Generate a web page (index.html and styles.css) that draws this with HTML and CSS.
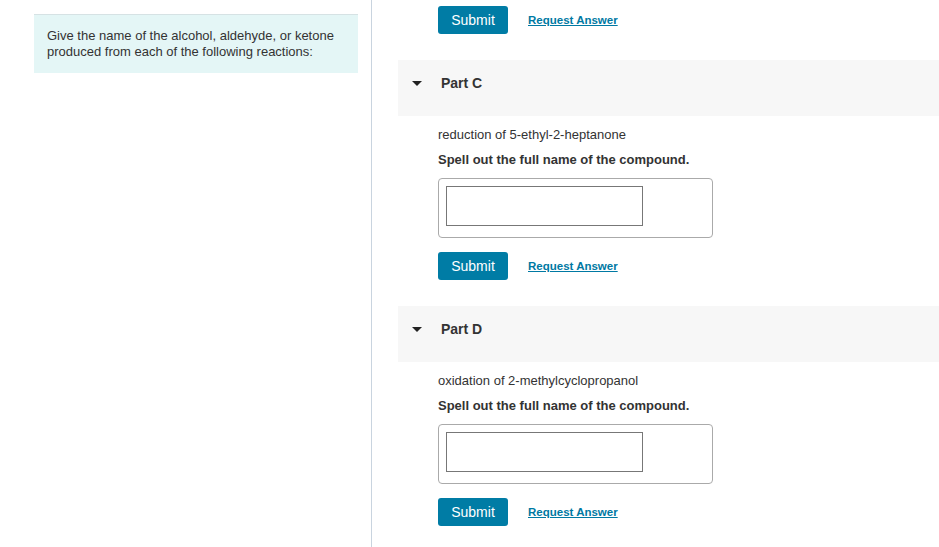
FILE: index.html
```html
<!DOCTYPE html>
<html lang="en">
<head>
  <meta charset="UTF-8">
  <title>Alcohols, Aldehydes and Ketones</title>
  <meta name="viewport" content="width=device-width, initial-scale=1.0">
  <link rel="stylesheet" href="styles.css">
</head>
<body>
  <div class="page">
    <div class="intro-col">
      <div class="intro-box">
        Give the name of the alcohol, aldehyde, or ketone<br>
        produced from each of the following reactions:
      </div>
    </div>
    <div class="parts-col">
      <div class="actions first">
        <button class="submit-btn">Submit</button>
        <a class="request-link" href="#">Request Answer</a>
      </div>

      <div class="part">
        <div class="part-header">
          <span class="caret"></span>
          <span class="part-title">Part C</span>
        </div>
        <div class="part-body">
          <p class="prompt">reduction of 5-ethyl-2-heptanone</p>
          <p class="instruction">Spell out the full name of the compound.</p>
          <div class="answer-box">
            <input class="answer-input" type="text" aria-label="Part C answer">
          </div>
          <div class="actions">
            <button class="submit-btn">Submit</button>
            <a class="request-link" href="#">Request Answer</a>
          </div>
        </div>
      </div>

      <div class="part">
        <div class="part-header">
          <span class="caret"></span>
          <span class="part-title">Part D</span>
        </div>
        <div class="part-body">
          <p class="prompt">oxidation of 2-methylcyclopropanol</p>
          <p class="instruction">Spell out the full name of the compound.</p>
          <div class="answer-box">
            <input class="answer-input" type="text" aria-label="Part D answer">
          </div>
          <div class="actions">
            <button class="submit-btn">Submit</button>
            <a class="request-link" href="#">Request Answer</a>
          </div>
        </div>
      </div>
    </div>
  </div>
</body>
</html>
```

FILE: styles.css
```css
body {
  margin: 0;
  font-family: "Liberation Sans", Arial, sans-serif;
  color: #333;
  background: #fff;
}
.page {
  display: flex;
  min-height: 547px;
}
.intro-col {
  width: 371px;
  flex-shrink: 0;
  padding: 14px 13px 0 34px;
  box-sizing: border-box;
}
.intro-box {
  background: #e4f6f6;
  border-top: 1px solid #d6e2e4;
  padding: 13px 13px 13px 13px;
  font-size: 13px;
  line-height: 16px;
  color: #333;
}
.parts-col {
  flex: 1;
  border-left: 1px solid #c9d4df;
  padding-left: 26px;
  padding-top: 6px;
}
.actions {
  display: flex;
  align-items: center;
  gap: 20px;
  margin-bottom: 26px;
}
.actions.first {
  margin-left: 40px;
}
.submit-btn {
  width: 70px;
  height: 28px;
  background: #007ca5;
  color: #fff;
  border: none;
  border-radius: 3px;
  font-family: inherit;
  font-size: 14px;
  padding: 0;
  cursor: pointer;
}
.request-link {
  color: #0079a3;
  font-size: 11.5px;
  font-weight: bold;
  text-decoration: underline;
}
.part-header {
  height: 56px;
  box-sizing: border-box;
  background: #f7f7f7;
  display: flex;
  align-items: flex-start;
  padding: 15px 0 0 14px;
}
.caret {
  width: 0;
  height: 0;
  border-left: 5px solid transparent;
  border-right: 5px solid transparent;
  border-top: 5px solid #222;
  margin-right: 19px;
  margin-top: 6px;
}
.part-title {
  font-size: 14px;
  line-height: 16px;
  font-weight: bold;
  color: #333;
}
.part-body {
  padding-left: 40px;
  padding-top: 11px;
}
.prompt {
  margin: 0;
  font-size: 13px;
  line-height: 16px;
}
.instruction {
  margin: 9px 0 0 0;
  font-size: 13px;
  line-height: 16px;
  font-weight: bold;
}
.answer-box {
  width: 275px;
  height: 60px;
  box-sizing: border-box;
  margin-top: 10px;
  margin-bottom: 14px;
  border: 1px solid #aaa;
  border-radius: 4px;
  padding: 7px;
}
.answer-input {
  display: block;
  width: 197px;
  height: 40px;
  box-sizing: border-box;
  border: 1px solid #777;
  margin: 0;
  padding: 0 4px;
  font-family: inherit;
  font-size: 13px;
}
```
